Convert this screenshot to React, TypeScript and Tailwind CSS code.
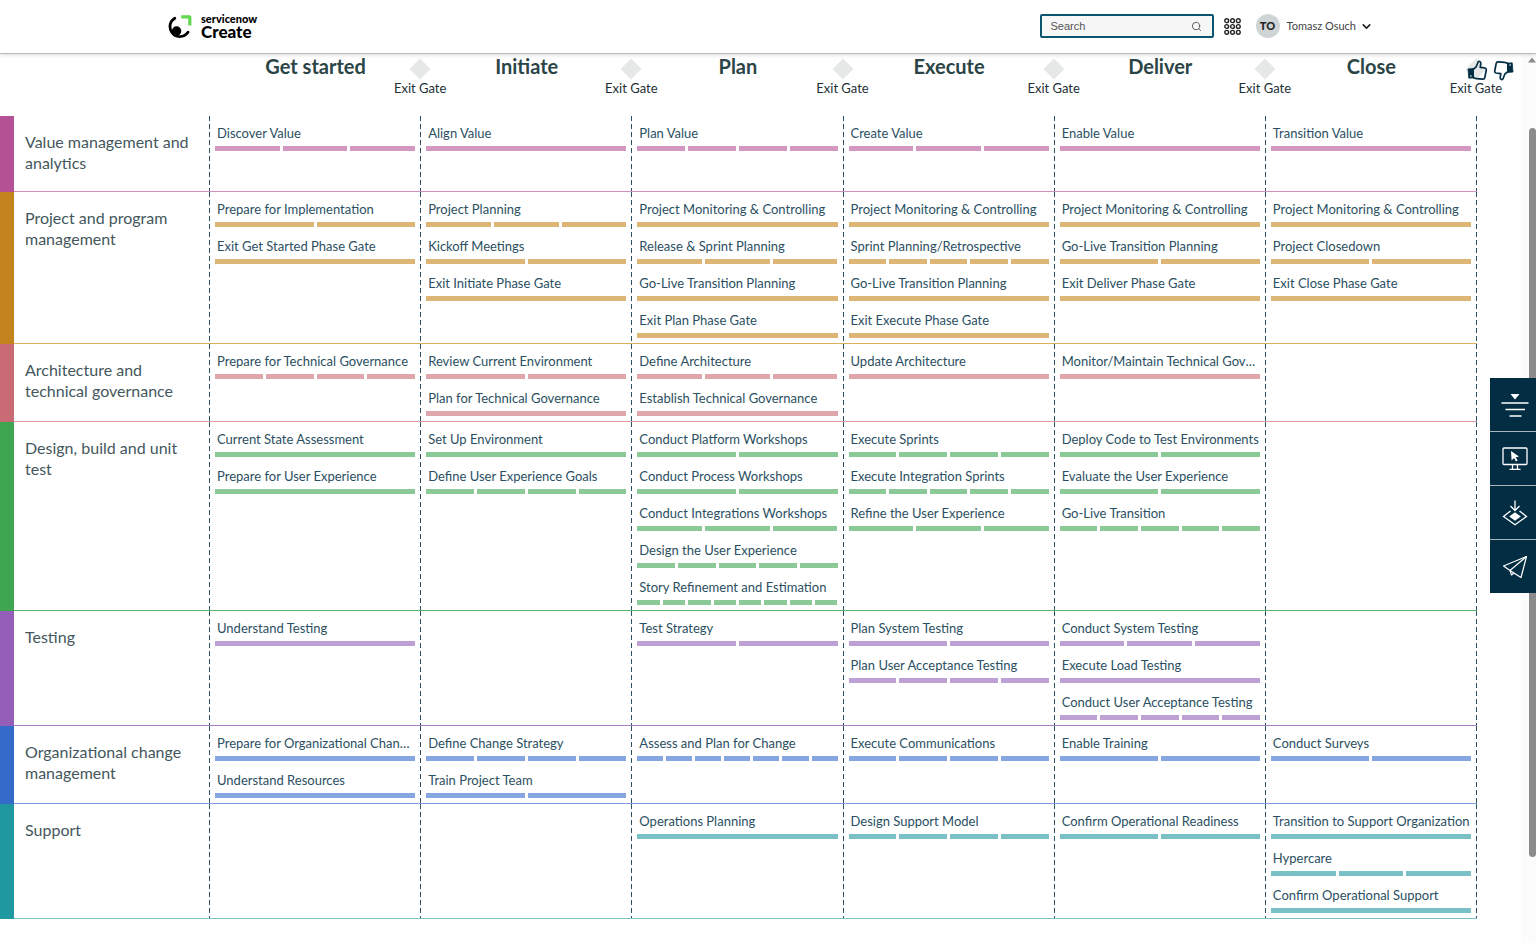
import React from "react";
import { ChevronDown, Search } from "lucide-react";

type Item = [string, number];
type Lane = { name: string; side: string; bar: string; line: string; cells: Item[][] };

const phases = ["Get started", "Initiate", "Plan", "Execute", "Deliver", "Close"];

const lanes: Lane[] = [
  {
    name: "Value management and analytics",
    side: "bg-[#b55296]",
    bar: "bg-[#d397c0]",
    line: "bg-[#d48fbf]",
    cells: [
      [["Discover Value", 3]],
      [["Align Value", 1]],
      [["Plan Value", 4]],
      [["Create Value", 3]],
      [["Enable Value", 1]],
      [["Transition Value", 1]],
    ],
  },
  {
    name: "Project and program management",
    side: "bg-[#c4831c]",
    bar: "bg-[#dcb577]",
    line: "bg-[#dcb060]",
    cells: [
      [["Prepare for Implementation", 2], ["Exit Get Started Phase Gate", 1]],
      [["Project Planning", 3], ["Kickoff Meetings", 2], ["Exit Initiate Phase Gate", 1]],
      [["Project Monitoring & Controlling", 1], ["Release & Sprint Planning", 3], ["Go-Live Transition Planning", 1], ["Exit Plan Phase Gate", 1]],
      [["Project Monitoring & Controlling", 1], ["Sprint Planning/Retrospective", 5], ["Go-Live Transition Planning", 1], ["Exit Execute Phase Gate", 1]],
      [["Project Monitoring & Controlling", 1], ["Go-Live Transition Planning", 2], ["Exit Deliver Phase Gate", 1]],
      [["Project Monitoring & Controlling", 1], ["Project Closedown", 2], ["Exit Close Phase Gate", 1]],
    ],
  },
  {
    name: "Architecture and technical governance",
    side: "bg-[#c96b74]",
    bar: "bg-[#dfa6ab]",
    line: "bg-[#e0999f]",
    cells: [
      [["Prepare for Technical Governance", 4]],
      [["Review Current Environment", 2], ["Plan for Technical Governance", 1]],
      [["Define Architecture", 3], ["Establish Technical Governance", 1]],
      [["Update Architecture", 1]],
      [["Monitor/Maintain Technical Governance", 1]],
      [],
    ],
  },
  {
    name: "Design, build and unit test",
    side: "bg-[#3ea650]",
    bar: "bg-[#8bca96]",
    line: "bg-[#5cb46b]",
    cells: [
      [["Current State Assessment", 1], ["Prepare for User Experience", 1]],
      [["Set Up Environment", 1], ["Define User Experience Goals", 4]],
      [["Conduct Platform Workshops", 2], ["Conduct Process Workshops", 2], ["Conduct Integrations Workshops", 3], ["Design the User Experience", 5], ["Story Refinement and Estimation", 8]],
      [["Execute Sprints", 4], ["Execute Integration Sprints", 5], ["Refine the User Experience", 3]],
      [["Deploy Code to Test Environments", 2], ["Evaluate the User Experience", 2], ["Go-Live Transition", 5]],
      [],
    ],
  },
  {
    name: "Testing",
    side: "bg-[#945fb8]",
    bar: "bg-[#bda0d4]",
    line: "bg-[#a87fc6]",
    cells: [
      [["Understand Testing", 1]],
      [],
      [["Test Strategy", 2]],
      [["Plan System Testing", 2], ["Plan User Acceptance Testing", 4]],
      [["Conduct System Testing", 3], ["Execute Load Testing", 1], ["Conduct User Acceptance Testing", 5]],
      [],
    ],
  },
  {
    name: "Organizational change management",
    side: "bg-[#346bcb]",
    bar: "bg-[#85a6e0]",
    line: "bg-[#7d9fdd]",
    cells: [
      [["Prepare for Organizational Change Management", 1], ["Understand Resources", 1]],
      [["Define Change Strategy", 4], ["Train Project Team", 2]],
      [["Assess and Plan for Change", 7]],
      [["Execute Communications", 4]],
      [["Enable Training", 2]],
      [["Conduct Surveys", 2]],
    ],
  },
  {
    name: "Support",
    side: "bg-[#1f98a0]",
    bar: "bg-[#79c1c6]",
    line: "bg-[#79c1c6]",
    cells: [
      [],
      [],
      [["Operations Planning", 1]],
      [["Design Support Model", 4]],
      [["Confirm Operational Readiness", 2]],
      [["Transition to Support Organization", 1], ["Hypercare", 3], ["Confirm Operational Support", 1]],
    ],
  },
];

function Logo() {
  return (
    <a href="#" aria-label="ServiceNow Create" className="flex items-center gap-2 text-black">
      <svg width="25" height="25" viewBox="0 0 25 25" fill="none" aria-hidden="true">
        <path d="M6.8 4.200C1.600 7.200 0.800 13.500 3.600 18C7.500 24.200 16 23.800 20 18.200" stroke="#000" strokeWidth="2.800" strokeLinecap="round" />
        <circle cx="8.600" cy="17" r="4.700" fill="#000" />
        <path d="M13.200 2.800h8.600v8.700" stroke="#62d84e" strokeWidth="3.200" strokeLinejoin="round" />
      </svg>
      <span className="flex flex-col font-[Lato,sans-serif] font-black">
        <span className="text-[11px] leading-[11px]">servicenow</span>
        <span className="text-[17px] leading-[15px]">Create</span>
      </span>
    </a>
  );
}

function AppsGrid() {
  const dots = [2.7, 8.5, 14.3];
  return (
    <svg width="17" height="17" viewBox="0 0 17 17" fill="none" stroke="#222" strokeWidth="1.4" aria-hidden="true">
      {dots.map((y) => dots.map((x) => <circle key={`${x}-${y}`} cx={x} cy={y} r="1.9" />))}
    </svg>
  );
}

function Header() {
  return (
    <header className="relative z-10 flex h-[54px] items-center justify-between border-b border-[#b3bcc2] bg-white pr-[163px] pb-px pl-[168px] shadow-[0_1px_4px_rgba(0,0,0,0.15)]">
      <Logo />
      <div className="flex items-center">
        <label className="flex h-6 w-[174px] items-center rounded-[2px] border-2 border-[#0b566f] bg-[#f7f7f7] pr-2.5 pl-[9px]">
          <span className="sr-only">Search</span>
          <input
            type="text"
            placeholder="Search"
            className="h-5 w-full min-w-0 bg-transparent font-['Liberation_Sans',sans-serif] text-[11px] leading-5 outline-none placeholder:text-[#555]"
          />
          <Search size={11} strokeWidth={2} className="shrink-0 text-[#555]" />
        </label>
        <button type="button" aria-label="Applications" className="ml-2.5">
          <AppsGrid />
        </button>
        <button type="button" className="ml-[15px] flex items-center text-[11px] text-[#444]">
          <span className="flex size-6 items-center justify-center rounded-full bg-[#cfd4d6] font-black text-[#222]">TO</span>
          <span className="ml-[7px]">Tomasz Osuch</span>
          <ChevronDown size={13} strokeWidth={3} className="ml-1 text-[#222]" />
        </button>
      </div>
    </header>
  );
}

function PhaseHeadings() {
  return (
    <div className="grid h-[62px] grid-cols-6 pr-px pl-[209px]">
      {phases.map((phase) => (
        <div key={phase} className="flex items-start">
          <h2 className="flex-1 pl-8 text-center text-[20px] leading-6 font-bold text-[#2b4547]">{phase}</h2>
          <div className="-mr-[30px] flex w-[60px] shrink-0 flex-col items-center pt-1">
            <svg width="22" height="22" viewBox="0 0 22 22" aria-hidden="true">
              <path d="M11 0.500L21.500 11L11 21.500L0.500 11z" fill="#e6e8e8" />
            </svg>
            <span className="text-[13px] leading-4 whitespace-nowrap text-[#222f35]">Exit Gate</span>
          </div>
        </div>
      ))}
    </div>
  );
}

function Activity({ item: [title, parts], bar }: { item: Item; bar: string }) {
  return (
    <a href="#" title={title} className="block">
      <span className="block truncate pl-0.5 text-[13px] leading-5 text-[#2b4f62]">{title}</span>
      <span className="mt-[3px] flex h-[5px] gap-[3px]">
        {Array.from({ length: parts }, (_, i) => (
          <span key={i} className={`flex-1 ${bar}`} />
        ))}
      </span>
    </a>
  );
}

const dashes = "bg-[repeating-linear-gradient(to_bottom,#2c5365_0_5px,transparent_5px_8px)] bg-no-repeat";

function LaneRow({ lane }: { lane: Lane }) {
  return (
    <section className="flex">
      <div className={`w-3.5 shrink-0 ${lane.side}`} />
      <div className="flex min-w-0 flex-1 flex-col">
        <div className="flex">
          <h3 className="w-[195px] shrink-0 pt-[15px] pr-2 pb-[18px] pl-[11px] text-[16px] leading-[21px] text-[#44575c]">{lane.name}</h3>
          <div className="grid min-w-0 flex-1 grid-cols-6">
            {lane.cells.map((items, i) => (
              <div
                key={i}
                className={`flex min-w-0 flex-col gap-[9px] bg-[length:1px_100%] pt-[7px] pr-[5px] pb-[5px] pl-1.5 ${dashes}`}
              >
                {items.map((item) => (
                  <Activity key={item[0]} item={item} bar={lane.bar} />
                ))}
              </div>
            ))}
          </div>
          <div className={`w-px shrink-0 ${dashes}`} />
        </div>
        <div className={`h-px ${lane.line}`} />
      </div>
    </section>
  );
}

function ThumbIcon({ down = false }: { down?: boolean }) {
  return (
    <svg width="21" height="21" viewBox="0 0 21 21" fill="none" aria-hidden="true">
      <g transform={down ? "rotate(180 10.5 10.5)" : undefined}>
        <path
          d="M6 9.500L9.200 6.800L11 2.200C11.500 1 14 1.300 13.800 3.300L13.200 7.400L18 8C19.300 8.200 19.400 9.600 19.200 10.500L17.800 17.600C17.600 18.700 16.900 19.300 15.700 19.200L9.500 18.700L6.200 17.600z"
          stroke="currentColor"
          strokeWidth="1.700"
          strokeLinejoin="round"
        />
        <path d="M1 9l5-.4.600 9.200-4.800.4z" fill="currentColor" stroke="currentColor" strokeWidth="0.800" strokeLinejoin="round" />
        <circle cx="3.900" cy="16" r="0.800" fill="#fff" />
      </g>
    </svg>
  );
}

function SideTools() {
  const base = "flex h-[53px] w-[46px] items-center justify-center bg-[#032d42] pl-1 text-white";
  return (
    <nav aria-label="Tools" className="fixed top-[378px] right-0 z-20 flex flex-col gap-px bg-[#a9b6bd]">
      <button type="button" aria-label="Filter" className={base}>
        <svg width="28" height="26" viewBox="0 0 28 26" stroke="currentColor" strokeWidth="1.500" fill="none">
          <path d="M9.500 2h9L14 7.500z" fill="currentColor" stroke="none" />
          <path d="M0.500 11h27M4.500 17.500h19.500M8.500 24h12" />
        </svg>
      </button>
      <button type="button" aria-label="Demo" className={base}>
        <svg width="26" height="24" viewBox="0 0 26 24" stroke="currentColor" strokeWidth="1.300" fill="none">
          <rect x="1" y="1" width="24" height="16.500" rx="1" />
          <path d="M10.500 17.500v4.500M15.500 17.500v4.500M7.500 22.300h11" />
          <path d="M9 4l8 5.500-3.300.7 2 3.200-1.700 1-2-3.300L9.600 13.500z" fill="currentColor" stroke="none" />
        </svg>
      </button>
      <button type="button" aria-label="Import" className={base}>
        <svg width="26" height="26" viewBox="0 0 26 26" stroke="currentColor" strokeWidth="1.300" fill="none">
          <path d="M13 0.500v9.500M8.500 6l4.500 4.500L17.500 6" />
          <path d="M8.500 11L1.500 16.500L13 24.800L24.500 16.500L17.500 11" />
          <path d="M13 12.200l5.800 4.300-5.800 4.300-5.800-4.300z" fill="currentColor" stroke="none" />
        </svg>
      </button>
      <button type="button" aria-label="Send" className={base}>
        <svg width="26" height="24" viewBox="0 0 26 24" stroke="currentColor" strokeWidth="1.200" strokeLinejoin="round" fill="none">
          <path d="M24.500 1.500L1.500 11L8 15.500L19 22.500z" />
          <path d="M24.500 1.500L8 15.500L9.500 20L12 18" />
        </svg>
      </button>
    </nav>
  );
}

export default function App() {
  return (
    <div className="flex h-screen flex-col overflow-hidden bg-white font-[Lato,sans-serif]">
      <Header />
      <div className="flex min-h-0 flex-1">
        <main className="relative min-w-0 flex-1 overflow-hidden pr-11">
          <PhaseHeadings />
          {lanes.map((lane) => (
            <LaneRow key={lane.name} lane={lane} />
          ))}
          <div className="absolute top-1.5 right-[7px] flex gap-[5px] text-[#032d42]">
            <button type="button" aria-label="Helpful">
              <ThumbIcon />
            </button>
            <button type="button" aria-label="Not helpful">
              <ThumbIcon down />
            </button>
          </div>
        </main>
        <div aria-hidden="true" className="flex w-[15px] shrink-0 flex-col items-end bg-[#fcfcfc]">
          <svg width="8" height="6" viewBox="0 0 8 6" className="mt-[3px] mb-[65px] shrink-0">
            <path d="M4 0.500L8 5.500H0z" fill="#8b8b8b" />
          </svg>
          <div className="h-[82%] w-[7px] rounded-full bg-[#8b8b8b]" />
        </div>
      </div>
      <SideTools />
    </div>
  );
}
